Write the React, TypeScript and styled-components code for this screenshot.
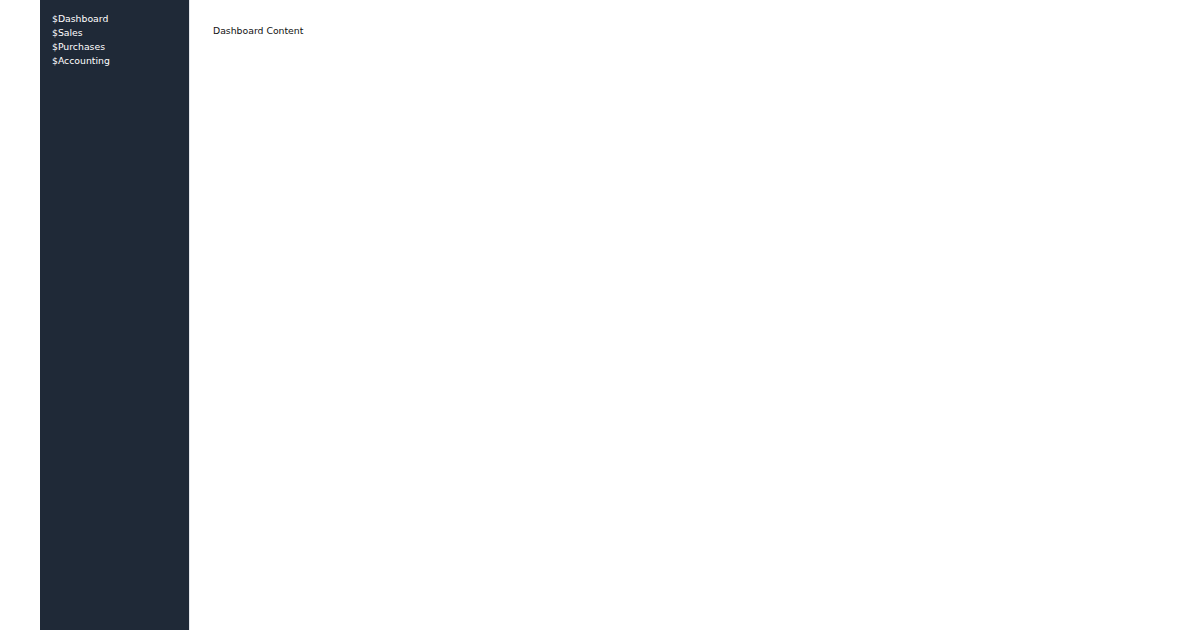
import React from 'react';
import styled, { createGlobalStyle } from 'styled-components';

const GlobalStyle = createGlobalStyle`
  html, body {
    margin: 0;
    padding: 0;
    background: #ffffff;
    font-family: "DejaVu Sans", sans-serif;
    font-size: 9.3px;
  }
`;

const Layout = styled.div`
  display: flex;
  height: 630px;
  padding-left: 40px;
`;

const Sidebar = styled.nav`
  width: 150px;
  flex-shrink: 0;
  background-color: #1f2937;
  padding: 12px 12px;
  box-sizing: border-box;
  border-right: 1px solid #e5e7eb;
`;

const NavItem = styled.div`
  color: #ffffff;
  line-height: 14px;
`;

const Main = styled.main`
  flex: 1;
  padding: 24px 23px;
  color: #111111;
  line-height: 14px;
`;

const items = ['Dashboard', 'Sales', 'Purchases', 'Accounting'];

const App: React.FC = () => {
  return (
    <>
      <GlobalStyle />
      <Layout>
        <Sidebar>
          {items.map((item) => (
            <NavItem key={item}>${item}</NavItem>
          ))}
        </Sidebar>
        <Main>Dashboard Content</Main>
      </Layout>
    </>
  );
};

export default App;
